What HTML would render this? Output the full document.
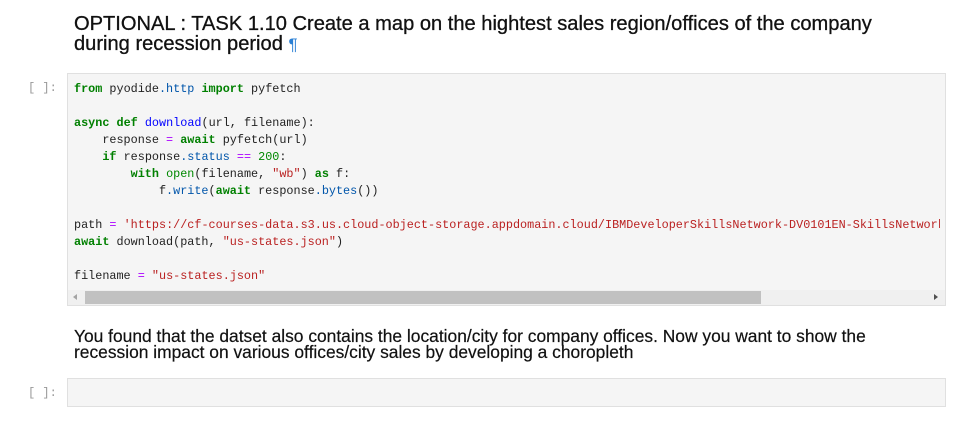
<!DOCTYPE html>
<html><head><meta charset="utf-8"><style>
body{margin:0;background:#fff;width:955px;height:425px;overflow:hidden;position:relative;font-family:"Liberation Sans",sans-serif;color:#111}
.abs{position:absolute}
h1{position:absolute;left:74px;top:14px;margin:0;font-weight:normal;font-size:20.1px;line-height:20px;color:#111;width:815px;-webkit-text-stroke:0.3px #111}
h1 .p{color:#2a7fd4;font-size:17px;-webkit-text-stroke:0}
.prompt{position:absolute;left:28px;font-family:"Liberation Mono",monospace;font-size:12px;color:#999}
.cell{position:absolute;left:67px;width:877px;background:#f5f5f5;border:1px solid #e0e0e0}
pre{margin:0;position:absolute;left:6px;top:7px;font-family:"Liberation Mono",monospace;font-size:11.8px;line-height:17px;color:#222;white-space:pre;overflow:hidden;width:866px}
.k{color:#008000;font-weight:bold}.n{color:#00f}.s{color:#ba2121}.o{color:#a0f}.a{color:#05a}.m{color:#080}
.sb{position:absolute;left:0;top:216px;width:877px;height:15px;background:#f0f0f0}
.th{position:absolute;left:17px;top:1px;width:676px;height:13px;background:#c1c1c1}
p{position:absolute;left:74px;top:328px;margin:0;font-size:17.4px;line-height:16px;color:#111;width:815px;-webkit-text-stroke:0.2px #111}
</style></head><body>
<h1>OPTIONAL : TASK 1.10 Create a map on the hightest sales region/offices of the company during recession period <span class="p">¶</span></h1>
<div class="prompt" style="top:81px">[ ]:</div>
<div class="cell" style="top:73px;height:231px">
<pre><span class="k">from</span> pyodide<span class="a">.http</span> <span class="k">import</span> pyfetch

<span class="k">async</span> <span class="k">def</span> <span class="n">download</span>(url, filename):
    response <span class="o">=</span> <span class="k">await</span> pyfetch(url)
    <span class="k">if</span> response<span class="a">.status</span> <span class="o">==</span> <span class="m">200</span>:
        <span class="k">with</span> <span class="m">open</span>(filename, <span class="s">"wb"</span>) <span class="k">as</span> f:
            f<span class="a">.write</span>(<span class="k">await</span> response<span class="a">.bytes</span>())

path <span class="o">=</span> <span class="s">'https://cf-courses-data.s3.us.cloud-object-storage.appdomain.cloud/IBMDeveloperSkillsNetwork-DV0101EN-SkillsNetwork'</span>
<span class="k">await</span> download(path, <span class="s">"us-states.json"</span>)

filename <span class="o">=</span> <span class="s">"us-states.json"</span></pre>
<div class="sb"><div class="th"></div>
<div class="abs" style="left:5px;top:4px;width:0;height:0;border-top:3.5px solid transparent;border-bottom:3.5px solid transparent;border-right:4px solid #a3a3a3"></div>
<div class="abs" style="left:866px;top:4px;width:0;height:0;border-top:3.5px solid transparent;border-bottom:3.5px solid transparent;border-left:4px solid #505050"></div>
</div>
</div>
<p>You found that the datset also contains the location/city for company offices. Now you want to show the recession impact on various offices/city sales by developing a choropleth</p>
<div class="prompt" style="top:386px">[ ]:</div>
<div class="cell" style="top:378px;height:27px"></div>
</body></html>
